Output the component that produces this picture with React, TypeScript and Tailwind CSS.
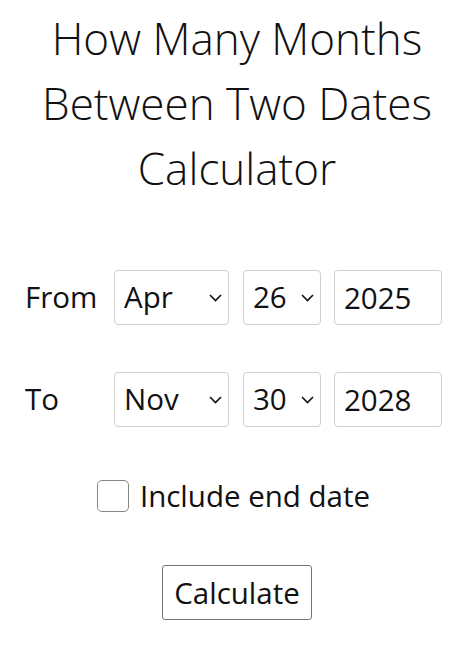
import { useState } from "react";

const months = ["Jan", "Feb", "Mar", "Apr", "May", "Jun", "Jul", "Aug", "Sep", "Oct", "Nov", "Dec"];
const days = Array.from({ length: 31 }, (_, i) => String(i + 1));

function Chevron() {
  return (
    <svg viewBox="0 0 13 8" className="pointer-events-none absolute right-[7px] top-1/2 h-[8px] w-[13px] -translate-y-1/2" fill="none" stroke="#111" strokeWidth="1.6">
      <path d="M1 1 6.5 6.5 12 1" />
    </svg>
  );
}

function Select({ value, options, width }: { value: string; options: string[]; width: string }) {
  return (
    <div className={`relative ${width}`}>
      <select
        defaultValue={value}
        className="h-[55px] w-full appearance-none rounded-[4px] border border-[#cfcfcf] bg-white pl-[9px] text-[29.5px] text-[#111] outline-none"
      >
        {options.map((o) => (
          <option key={o}>{o}</option>
        ))}
      </select>
      <Chevron />
    </div>
  );
}

function DateRow({ label, month, day, year }: { label: string; month: string; day: string; year: string }) {
  return (
    <div className="flex items-center">
      <span className="w-[89px] text-[29.5px] text-[#111]">{label}</span>
      <Select value={month} options={months} width="w-[115px]" />
      <div className="ml-[14px]">
        <Select value={day} options={days} width="w-[78px]" />
      </div>
      <input
        defaultValue={year}
        className="ml-[13px] h-[55px] w-[108px] rounded-[4px] border border-[#cfcfcf] bg-white pl-[9px] text-[29.5px] text-[#111] outline-none"
      />
    </div>
  );
}

export default function App() {
  const [incl, setIncl] = useState(false);

  return (
    <div className="flex min-h-[645px] flex-col items-center bg-white text-[#111]" style={{ fontFamily: '"Open Sans", "Noto Sans", sans-serif' }}>
      <h1 className="mt-[6px] text-center text-[44px] font-light leading-[65px]">
        How Many Months
        <br />
        Between Two Dates
        <br />
        Calculator
      </h1>

      <div className="mt-[69px] flex flex-col gap-[47px] pl-[25px] self-start">
        <DateRow label="From" month="Apr" day="26" year="2025" />
        <DateRow label="To" month="Nov" day="30" year="2028" />
      </div>

      <label className="mt-[53px] mr-[7px] flex h-[32px] items-center gap-[11px] text-[29.5px] leading-none">
        <span
          onClick={() => setIncl(!incl)}
          className="h-[32px] w-[32px] rounded-[5px] border-[1.5px] border-[#858585] bg-white"
        />
        Include end date
      </label>

      <button className="mt-[53px] h-[55px] rounded-[3px] border border-[#767676] bg-white px-[11px] text-[29.5px] leading-none">
        Calculate
      </button>
    </div>
  );
}
